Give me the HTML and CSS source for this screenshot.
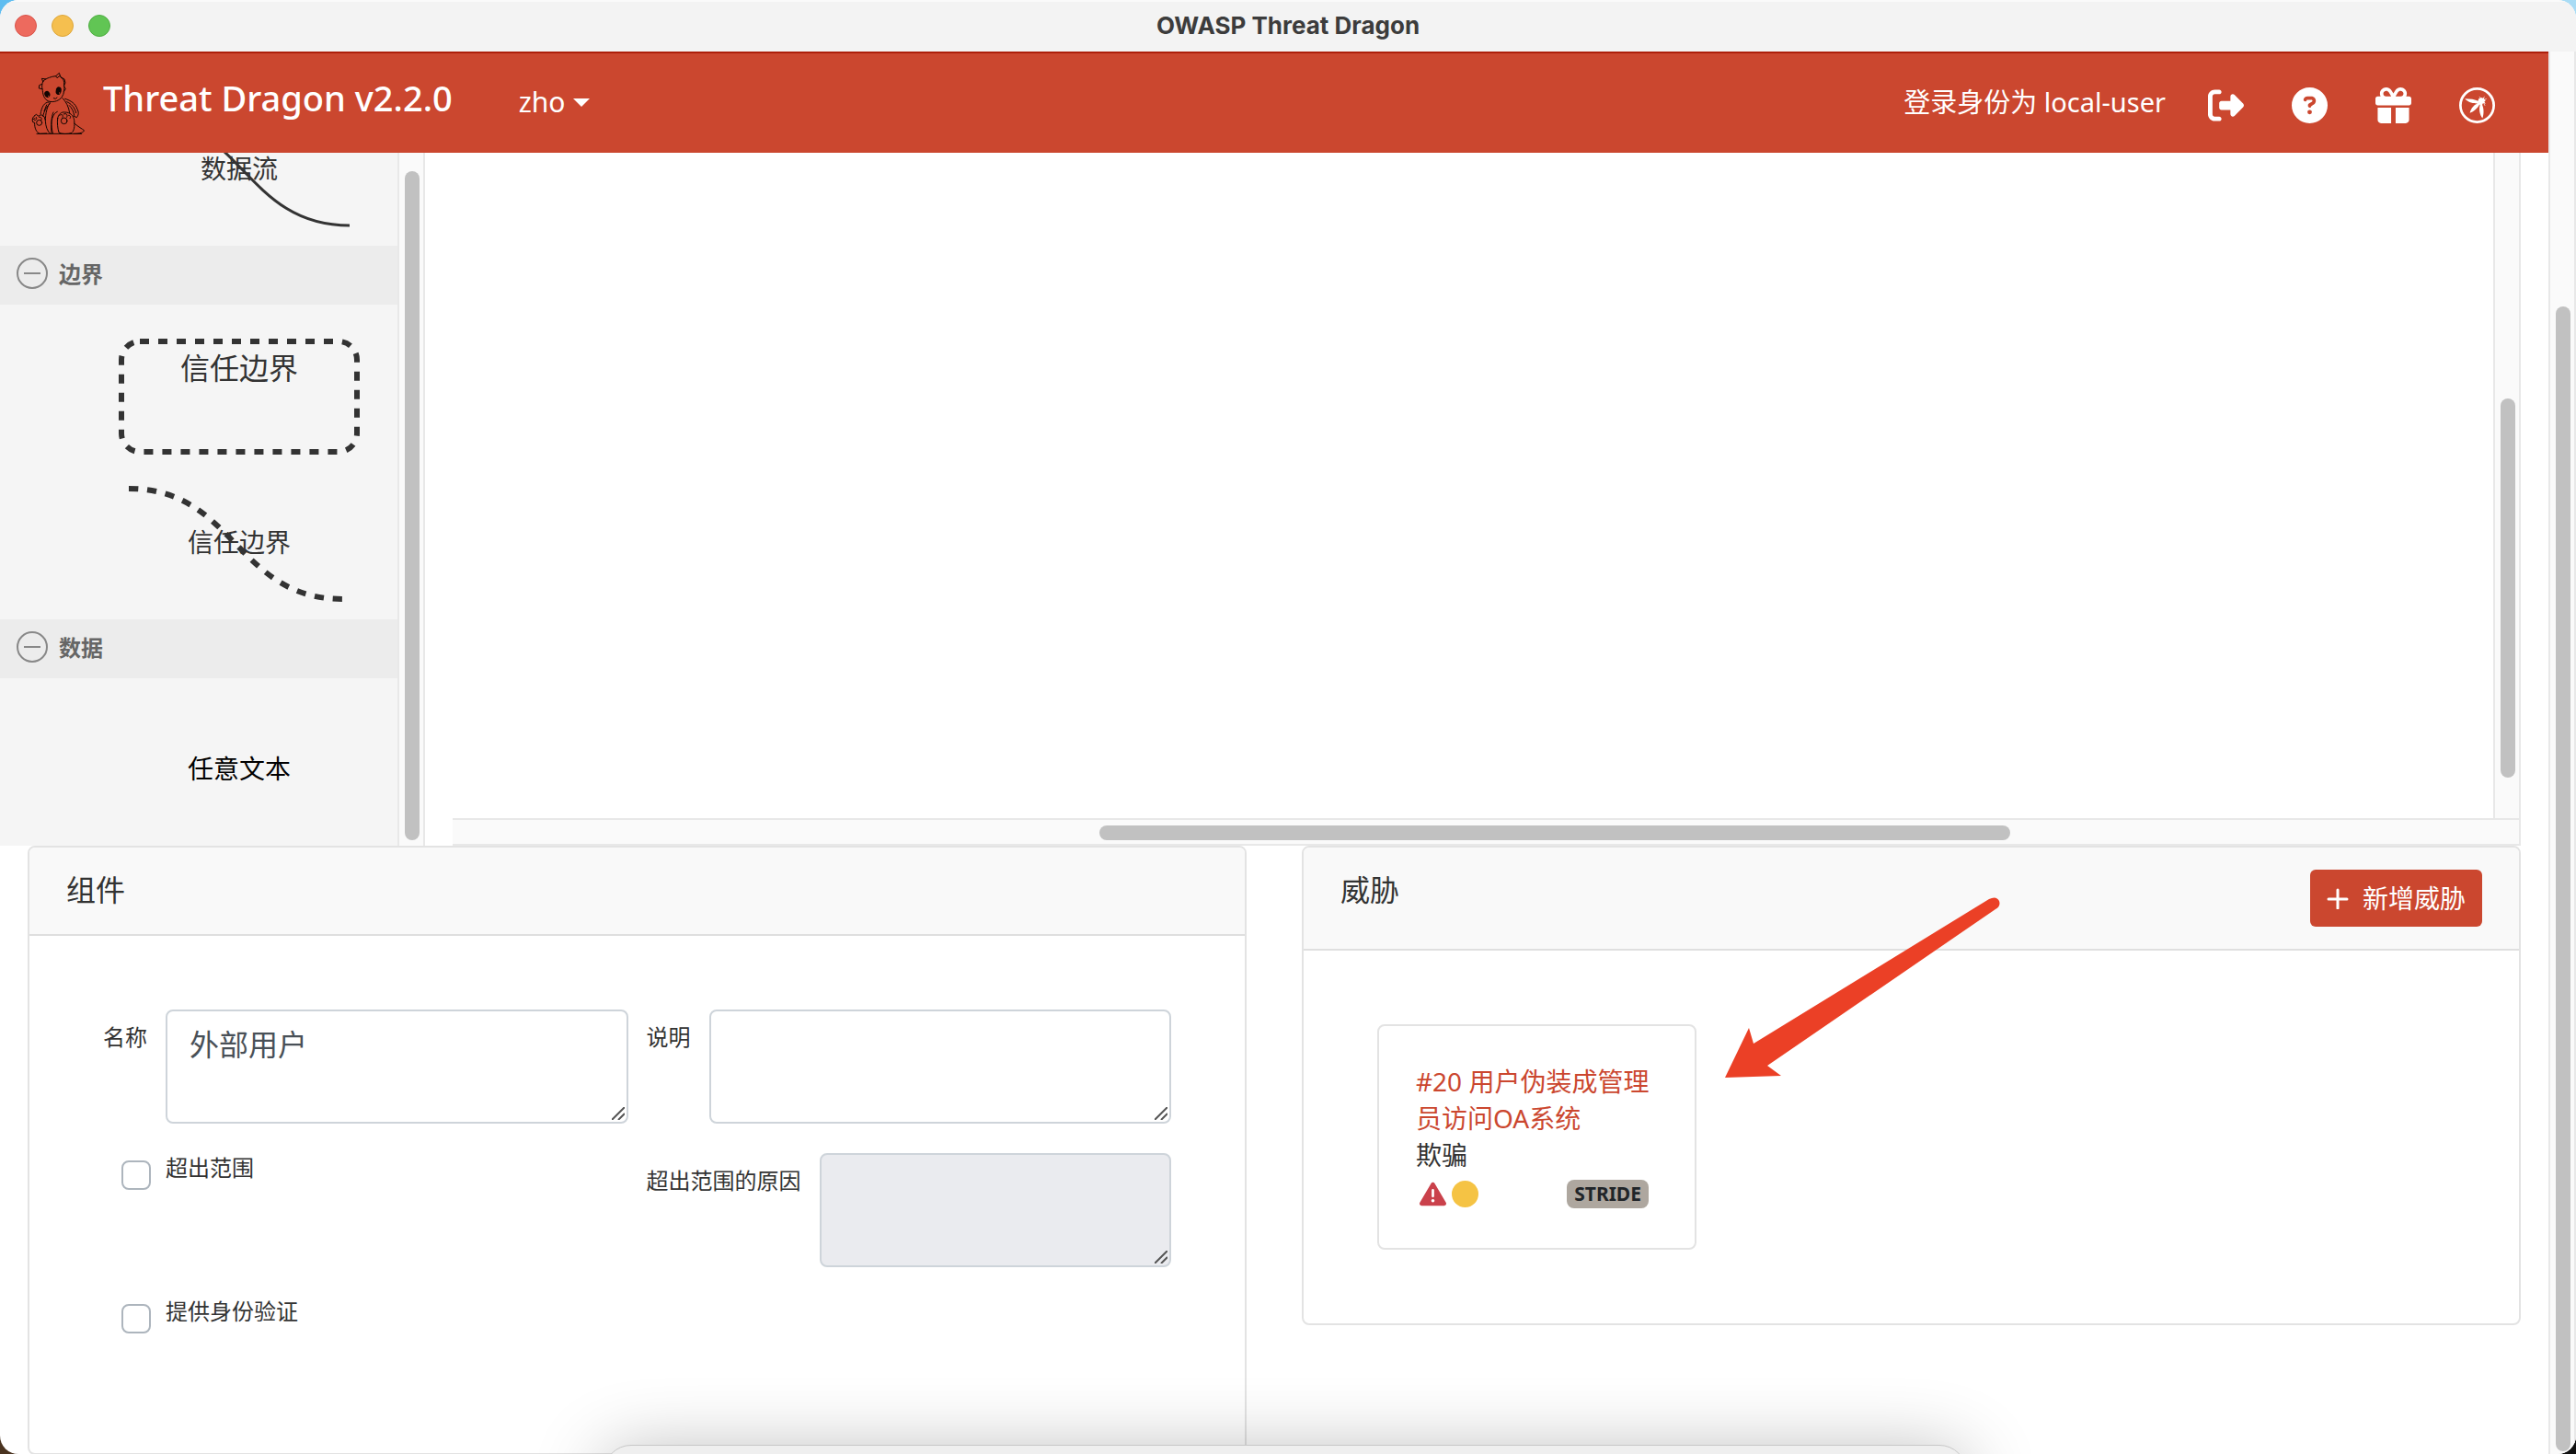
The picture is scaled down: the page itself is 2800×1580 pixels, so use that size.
FILE: index.html
```html
<!DOCTYPE html>
<html lang="zh">
<head>
<meta charset="utf-8">
<title>OWASP Threat Dragon</title>
<link rel="stylesheet" href="styles.css">
</head>
<body>
<div class="window">
  <header class="titlebar">
    <div class="lights">
      <button class="light light-close" aria-label="Close"></button>
      <button class="light light-min" aria-label="Minimize"></button>
      <button class="light light-max" aria-label="Zoom"></button>
    </div>
    <div class="window-title">OWASP Threat Dragon</div>
  </header>

  <div class="viewport">
    <main class="page">
      <nav class="navbar">
        <a class="brand" href="#">
          <svg class="logo" viewBox="0 0 270 300" aria-hidden="true">
            <g fill="none" stroke="#120502" stroke-width="3" stroke-linecap="round" stroke-linejoin="round">
              <path d="M80 80C84 71 98 68 110 64L122 62L133 52L138 66C146 69 150 78 149 90C151 104 149 120 142 130C134 142 116 148 102 145C88 142 80 128 79 110C76 98 76 88 80 80Z"/>
              <path d="M80 80L76 70L90 72M77 88L68 92L67 102L78 104M139 66L150 72L153 84L149 92M149 96L154 104L148 112M122 62L126 68L134 62"/>
              <path d="M104 146C94 160 88 184 88 208C89 226 94 242 104 250M144 134C156 146 164 162 167 182"/>
              <path d="M98 147C84 148 76 162 72 186M103 152C92 160 84 176 80 192M92 156L84 176"/>
              <path d="M152 136C172 142 186 152 192 170C198 180 196 190 190 197L180 192M158 146C172 152 184 164 188 182M166 158C174 166 180 176 182 190"/>
              <path d="M52 192C46 196 44 204 47 212L53 214C52 230 58 246 70 250L92 249M52 192L58 187L66 193L74 188L84 194L88 206M47 203L54 200M58 196C62 200 58 206 53 206M68 196C74 194 78 200 74 206"/>
              <circle cx="68" cy="214" r="9"/>
              <path d="M128 200C130 186 140 178 152 180C168 180 180 190 182 206C184 226 182 240 174 247C160 252 142 252 132 246C128 232 126 214 128 200ZM134 190C142 184 148 190 144 196M148 186C156 182 162 188 158 196M164 190C170 190 172 196 168 200"/>
              <circle cx="149" cy="208" r="10"/>
              <path d="M127 178C112 184 104 206 108 248M114 180C106 196 106 226 112 248"/>
              <path d="M182 216C196 228 208 234 214 239C214 245 202 250 182 250M60 250L206 250"/>
              <path d="M115 134L121 136L126 132"/>
            </g>
            <g fill="#120502">
              <ellipse cx="94" cy="121" rx="9" ry="11" transform="rotate(-20 94 121)"/>
              <ellipse cx="131" cy="110" rx="9" ry="13" transform="rotate(12 131 110)"/>
            </g>
            <g fill="#cb472f"><circle cx="98" cy="127" r="2"/><circle cx="134" cy="117" r="2"/></g>
          </svg>
          <span class="brand-name">Threat Dragon v2.2.0</span>
        </a>
        <button class="lang">zho<span class="caret"></span></button>
        <div class="nav-right">
          <span class="user">登录身份为 local-user</span>
          <a class="nav-icon" href="#" aria-label="Log out"><svg viewBox="0 0 512 512"><path d="M377.900 105.900L500.700 228.700c7.200 7.200 11.300 17.100 11.300 27.300s-4.100 20.100-11.300 27.300L377.900 406.100c-6.400 6.400-15 9.900-24 9.900c-18.700 0-33.900-15.200-33.900-33.900l0-62.100-128 0c-17.700 0-32-14.300-32-32l0-64c0-17.700 14.300-32 32-32l128 0 0-62.100c0-18.700 15.200-33.900 33.900-33.900c9 0 17.600 3.600 24 9.900zM160 96L96 96c-17.700 0-32 14.300-32 32l0 256c0 17.700 14.300 32 32 32l64 0c17.700 0 32 14.300 32 32s-14.300 32-32 32l-64 0c-53 0-96-43-96-96L0 128C0 75 43 32 96 32l64 0c17.700 0 32 14.300 32 32s-14.300 32-32 32z"/></svg></a>
          <a class="nav-icon" href="#" aria-label="Help"><svg viewBox="0 0 512 512"><path d="M256 512A256 256 0 1 0 256 0a256 256 0 1 0 0 512zM169.800 165.300c7.900-22.300 29.100-37.300 52.800-37.300l58.300 0c34.900 0 63.100 28.300 63.100 63.100c0 22.600-12.100 43.500-31.700 54.800L280 264.400c-.2 13-10.900 23.600-24 23.600c-13.300 0-24-10.700-24-24l0-13.500c0-8.600 4.600-16.500 12.100-20.800l44.300-25.400c4.700-2.700 7.600-7.700 7.600-13.100c0-8.400-6.800-15.100-15.100-15.100l-58.300 0c-3.400 0-6.400 2.100-7.500 5.300l-.4 1.200c-4.400 12.500-18.200 19-30.600 14.600s-19-18.200-14.600-30.600l.4-1.200zM224 352a32 32 0 1 1 64 0 32 32 0 1 1 -64 0z"/></svg></a>
          <a class="nav-icon" href="#" aria-label="Cheat sheets"><svg viewBox="0 0 512 512"><path d="M190.500 68.800L225.300 128l-1.300 0-72 0c-22.100 0-40-17.900-40-40s17.900-40 40-40l2.200 0c14.900 0 28.800 7.900 36.300 20.800zM64 88c0 14.400 3.500 28 9.600 40L32 128c-17.700 0-32 14.300-32 32l0 64c0 17.700 14.300 32 32 32l448 0c17.700 0 32-14.300 32-32l0-64c0-17.700-14.300-32-32-32l-41.600 0c6.100-12 9.600-25.600 9.600-40c0-48.600-39.400-88-88-88l-2.200 0c-31.900 0-61.500 16.900-77.700 44.400L256 85.500l-24.100-41C215.700 16.900 186.100 0 154.200 0L152 0C103.400 0 64 39.400 64 88zm336 0c0 22.100-17.900 40-40 40l-72 0-1.300 0 34.800-59.200C329.100 55.900 342.900 48 357.800 48l2.200 0c22.100 0 40 17.900 40 40zM32 288l0 176c0 26.500 21.500 48 48 48l144 0 0-224L32 288zM288 512l144 0c26.500 0 48-21.500 48-48l0-176-192 0 0 224z"/></svg></a>
          <a class="nav-icon" href="#" aria-label="OWASP"><svg viewBox="0 0 114 114"><circle cx="57" cy="57" r="53" fill="none" stroke="#fff" stroke-width="8"/><path d="M18 36C34 36 50 38 62 44L61 51C46 52 28 48 18 36ZM34 81C38 66 48 54 62 50L65 54C58 66 48 76 34 81ZM72 52C78 64 80 82 74 98C66 86 62 72 66 56ZM62 36L70 32L76 34L81 27L79 36L84 42L80 45L84 52L76 50L72 58L64 54L60 44Z"/><path d="M68 34L64 29M82 38L87 36M78 50L82 58M62 52L56 58" stroke="#fff" stroke-width="2"/></svg></a>
        </div>
      </nav>

      <section class="diagram">
        <aside class="stencil">
          <svg class="shape" width="432" height="101" viewBox="0 166 432 101">
            <text class="shape-label" x="260" y="194">数据流</text>
            <path class="flow" d="M148 125C264 125 264 245 380 245"/>
          </svg>
          <button class="group-title">
            <svg width="36" height="36" viewBox="0 0 36 36"><circle cx="18" cy="18" r="16"/><path d="M9 18H27"/></svg><span>边界</span>
          </button>
          <svg class="shape" width="432" height="342" viewBox="0 331 432 342">
            <rect class="boundary" x="132" y="371" width="256" height="120" rx="20"/>
            <text class="shape-label shape-label-lg" x="260" y="412">信任边界</text>
            <path class="boundary" d="M140 531C256 531 256 651 373 651"/>
            <text class="shape-label" x="260" y="600">信任边界</text>
          </svg>
          <button class="group-title">
            <svg width="36" height="36" viewBox="0 0 36 36"><circle cx="18" cy="18" r="16"/><path d="M9 18H27"/></svg><span>数据</span>
          </button>
          <div class="free-text">任意文本</div>
        </aside>
        <div class="track track-stencil"><div class="thumb"></div></div>
        <div class="graph">
          <div class="canvas"></div>
          <div class="track track-canvas"><div class="thumb"></div></div>
          <div class="track track-bottom"><div class="thumb"></div></div>
        </div>
      </section>

      <section class="cards">
        <form class="card">
          <div class="card-header"><h2>组件</h2></div>
          <div class="card-body fields">
            <div class="field">
              <label for="name">名称</label>
              <div class="area"><textarea id="name">外部用户</textarea><svg class="grip" viewBox="0 0 14 14"><path d="M0 14L14 0M7 14L14 7"/></svg></div>
            </div>
            <div class="field">
              <label for="desc">说明</label>
              <div class="area"><textarea id="desc"></textarea><svg class="grip" viewBox="0 0 14 14"><path d="M0 14L14 0M7 14L14 7"/></svg></div>
            </div>
            <div class="check">
              <input type="checkbox" id="oos"><label for="oos">超出范围</label>
            </div>
            <div class="field">
              <label for="reason">超出范围的原因</label>
              <div class="area"><textarea id="reason" disabled></textarea><svg class="grip" viewBox="0 0 14 14"><path d="M0 14L14 0M7 14L14 7"/></svg></div>
            </div>
            <div class="check">
              <input type="checkbox" id="auth"><label for="auth">提供身份验证</label>
            </div>
          </div>
        </form>

        <div class="card">
          <div class="card-header">
            <h2>威胁</h2>
            <button class="add"><svg width="24" height="24" viewBox="0 0 24 24"><path d="M12 3V23M2 13H22"/></svg>新增威胁</button>
          </div>
          <div class="card-body">
            <article class="threat">
              <a href="#">#20 用户伪装成管理员访问OA系统</a>
              <div>欺骗</div>
              <div class="threat-meta">
                <svg class="warn" viewBox="0 0 512 512"><path d="M256 32c14.200 0 27.300 7.500 34.500 19.800l216 368c7.300 12.400 7.300 27.700 .2 40.100S486.300 480 472 480L40 480c-14.300 0-27.600-7.700-34.700-20.100s-7-27.800 .2-40.100l216-368C228.700 39.500 241.800 32 256 32zm0 128c-13.300 0-24 10.700-24 24l0 112c0 13.300 10.700 24 24 24s24-10.700 24-24l0-112c0-13.300-10.700-24-24-24zm32 224a32 32 0 1 0 -64 0 32 32 0 1 0 64 0z"/></svg>
                <span class="severity"></span>
                <span class="badge">STRIDE</span>
              </div>
            </article>
          </div>
        </div>
      </section>

      <svg class="pointer" viewBox="1870 970 306 206" aria-hidden="true"><path d="M1875 1171L1901 1117L1906 1134L2162 977Q2170 973 2173 979Q2175 985 2169 988L1921 1158L1936 1169Z"/></svg>
    </main>
    <div class="track track-page"><div class="thumb"></div></div>
  </div>
  <div class="dock"></div>
</div>
</body>
</html>
```
FILE: styles.css
```css
* { box-sizing: border-box; }

html { height: 100%; overflow: hidden; }

body {
  margin: 0;
  min-height: 100%;
  font-family: "Noto Sans", "Noto Sans CJK SC", sans-serif;
  font-size: 28px;
  line-height: 40px;
  color: #333;
  background:
    linear-gradient(90deg, #5fbdf0, #a9dcf5) top / 100% 50% no-repeat,
    linear-gradient(90deg, #4a3320 50%, #111 50%) bottom / 100% 50% no-repeat;
}

button, input, textarea { font: inherit; color: inherit; margin: 0; }
button { border: 0; padding: 0; background: none; }
a { text-decoration: none; }

.window {
  position: relative;
  display: flex;
  flex-direction: column;
  height: 100vh;
  border-radius: 20px;
  overflow: hidden;
  background: #fff;
}

/* title bar */
.titlebar {
  flex: none;
  display: grid;
  grid-template-columns: 1fr auto 1fr;
  align-items: center;
  height: 56px;
  padding: 0 16px 2px;
  background: #f3f3f3;
  border-top: 2px solid #fafafa;
}
.lights { display: flex; gap: 16px; }
.light { width: 24px; height: 24px; border-radius: 50%; border: 1px solid; }
.light-close { background: #ed6a5e; border-color: #d9534a; }
.light-min { background: #f5bf4f; border-color: #dda63a; }
.light-max { background: #61c554; border-color: #50ad43; }
.window-title {
  font-family: Inter, sans-serif;
  font-weight: 700;
  font-size: 26px;
  color: #3c3c3c;
}

.viewport { flex: 1; display: flex; min-height: 0; }
.page { flex: 1; position: relative; min-width: 0; overflow: hidden; }

/* navigation bar */
.navbar {
  display: flex;
  align-items: center;
  height: 110px;
  padding: 0 58px 0 20px;
  background: #cb472f;
  border-top: 2px solid #ad1f0a;
  color: #fff;
}
.brand { display: flex; align-items: center; gap: 2px; color: #fff; }
.logo { width: 90px; height: 100px; }
.brand-name { font-size: 38px; font-weight: 500; line-height: 56px; padding-bottom: 12px; }
.lang {
  display: flex;
  align-items: center;
  gap: 8px;
  margin-left: 72px;
  padding-bottom: 2px;
  font-size: 30px;
}
.caret { border: 9px solid transparent; border-top-color: #fff; border-bottom: 0; }
.nav-right { display: flex; align-items: center; gap: 52px; margin-left: auto; }
.user { font-size: 29px; margin-right: -6px; padding-bottom: 2px; }
.nav-icon { display: block; padding-top: 4px; }
.nav-icon svg { display: block; width: 39px; height: 39px; fill: #fff; }

/* diagram area */
.diagram { display: flex; height: 753px; }
.stencil { flex: none; width: 432px; background: #f5f5f5; overflow: hidden; }
.shape { display: block; }
.shape-label { font-size: 28px; fill: #333; text-anchor: middle; }
.shape-label-lg { font-size: 32px; }
.flow { fill: none; stroke: #333; stroke-width: 3; }
.boundary { fill: none; stroke: #333; stroke-width: 6; stroke-dasharray: 10 10; }
.group-title {
  display: flex;
  align-items: center;
  gap: 11px;
  width: 100%;
  height: 64px;
  padding: 0 17px 4px;
  background: #ececec;
  color: #666;
  font-size: 24px;
  font-weight: 700;
}
.group-title span { padding-top: 2px; }
.group-title svg { fill: none; stroke: #888; stroke-width: 2; }
.free-text { padding: 78px 0 0 88px; text-align: center; color: #000; }

.track { background: #fafafa; border: 0 solid #e8e8e8; }
.thumb { background: #c1c1c1; border-radius: 8px; }
.track-stencil { flex: none; width: 30px; padding: 20px 4px 6px 6px; border-width: 0 2px; }
.track-stencil .thumb { height: 100%; }
.graph {
  flex: 1;
  display: grid;
  grid-template: 1fr 30px / 1fr 30px;
  margin: 0 30px 0 30px;
  background: #fff;
}
.track-canvas { padding: 267px 4px 44px 6px; border-width: 0 2px; }
.track-canvas .thumb { height: 100%; }
.track-bottom { grid-column: 1 / -1; padding: 6px 553px 0 703px; border-width: 2px 2px 2px 0; }
.track-bottom .thumb { height: 16px; }
.track-page { flex: none; width: 30px; padding: 277px 4px 3px 6px; border-width: 0 2px; }
.track-page .thumb { height: 100%; }

/* cards */
.cards {
  display: grid;
  grid-template-columns: 1fr 1fr;
  gap: 60px;
  align-items: start;
  padding: 0 30px;
}
.card { border: 2px solid #e3e3e3; border-radius: 8px; overflow: hidden; }
.card-header {
  display: flex;
  justify-content: space-between;
  align-items: flex-start;
  padding: 24px 40px;
  background: #f9f9f9;
  border-bottom: 2px solid #dfdfdf;
}
.card-header h2 { margin: 0; padding-bottom: 2px; font-size: 32px; font-weight: 400; line-height: 44px; }
.card-body { padding: 80px; }
.add {
  display: flex;
  align-items: center;
  gap: 15px;
  height: 62px;
  padding: 0 18px;
  border-radius: 6px;
  background: #cb472f;
  color: #fff;
}
.add svg { stroke: #fff; stroke-width: 3; stroke-linecap: round; }

.fields {
  display: grid;
  grid-template-columns: 1fr 1fr;
  grid-auto-rows: 124px;
  gap: 32px 20px;
  padding-bottom: 46px;
  font-size: 24px;
  line-height: 32px;
}
.field { display: flex; gap: 20px; }
.field label { flex: none; padding-top: 14px; }
.area { flex: 1; position: relative; }
.area textarea {
  display: block;
  width: 100%;
  height: 100%;
  padding: 12px 24px;
  border: 2px solid #ced4da;
  border-radius: 8px;
  background: #fff;
  color: #495057;
  font-size: 32px;
  line-height: 48px;
  resize: none;
}
.area textarea:disabled { background: #eaebef; }
.grip {
  position: absolute;
  right: 4px;
  bottom: 4px;
  width: 14px;
  height: 14px;
  stroke: #555;
  stroke-width: 2;
}
.check { display: flex; align-items: flex-start; gap: 16px; padding-left: 20px; }
.check input {
  appearance: none;
  width: 32px;
  height: 32px;
  margin-top: 8px;
  border: 2px solid #adb5bd;
  border-radius: 8px;
  background: #fff;
}

.threat {
  width: 347px;
  padding: 40px;
  border: 2px solid #e3e3e3;
  border-radius: 8px;
}
.threat a { color: #cb472f; }
.threat-meta { display: flex; align-items: center; gap: 6px; height: 41px; padding: 4px 10px 0 4px; }
.warn { width: 29px; height: 29px; fill: #ca414b; }
.severity { width: 29px; height: 29px; border-radius: 50%; background: #f5c344; }
.badge {
  margin-left: auto;
  padding: 0 8px;
  border-radius: 8px;
  background: #aea79f;
  color: #212529;
  font-size: 21px;
  font-weight: 700;
  line-height: 31px;
}

.pointer { position: absolute; left: 1870px; top: 914px; width: 306px; height: 206px; fill: #eb4026; }

/* edge of the dock rising behind the bottom of the screen */
.dock {
  position: absolute;
  left: 656px;
  right: 662px;
  bottom: -60px;
  height: 70px;
  border: 1px solid #c8c8c8;
  border-radius: 30px;
  background: #efefef;
  box-shadow: 0 10px 80px rgba(0, 0, 0, .3);
}
```
